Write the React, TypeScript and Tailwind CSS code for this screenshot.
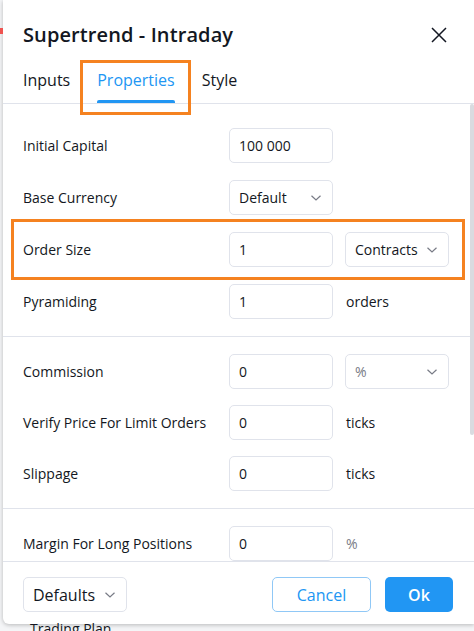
import React from "react";

const font = { fontFamily: '"Open Sans", "Noto Sans", sans-serif' };

function Chevron({ className = "" }: { className?: string }) {
  return (
    <svg width="12" height="8" viewBox="0 0 12 8" className={className}>
      <path d="M1.5 1.8 L6 6 L10.5 1.8" fill="none" stroke="#787b86" strokeWidth="1.2" />
    </svg>
  );
}

function Field({ value }: { value: string }) {
  return (
    <div className="w-[104px] h-[35px] border border-[#e0e3eb] rounded-[5px] flex items-center px-[9px] text-[14px] text-[#131722]">
      {value}
    </div>
  );
}

function Select({ value, muted }: { value: string; muted?: boolean }) {
  return (
    <div className="w-[104px] h-[35px] border border-[#e0e3eb] rounded-[5px] flex items-center justify-between pl-[9px] pr-[10px] text-[14px]">
      <span className={muted ? "text-[#787b86]" : "text-[#131722]"}>{value}</span>
      <Chevron />
    </div>
  );
}

function Row({ label, children, highlight }: { label: string; children: React.ReactNode; highlight?: boolean }) {
  return (
    <div className="relative flex items-center h-[35px]">
      <div className="w-[206px] text-[14px] text-[#131722] whitespace-nowrap">{label}</div>
      <div className="flex items-center gap-[12px]">{children}</div>
      {highlight && (
        <div className="absolute left-[-12px] right-[9px] top-[-13px] bottom-[-13px] border-[3px] border-[#f58220] pointer-events-none" />
      )}
    </div>
  );
}

function Unit({ text }: { text: string }) {
  return <span className="ml-[1px] text-[14px] text-[#131722]">{text}</span>;
}

export default function App() {
  return (
    <div className="relative w-[474px] h-[631px] overflow-hidden bg-[#f4f5f7]" style={font}>
      <div className="absolute left-0 top-[28px] w-[3px] h-[6px] bg-[#ef5350]" />
      <div className="flex flex-col ml-[3px] w-[471px] h-[624px] bg-white shadow-[0_1px_4px_rgba(0,0,0,0.25)] rounded-bl-[6px]">
        {/* Header */}
        <div className="flex items-center justify-between h-[60px] pl-[20px] pr-[26px] pt-[10px]">
          <div className="text-[20px] font-semibold text-[#131722] tracking-[0.1px]">Supertrend - Intraday</div>
          <svg width="18" height="18" viewBox="0 0 18 18">
            <path d="M2 2 L16 16 M16 2 L2 16" stroke="#131722" strokeWidth="1.5" fill="none" />
          </svg>
        </div>
        {/* Tabs */}
        <div className="flex items-end h-[44px] pl-[20px] gap-[27px] border-b border-[#e0e3eb]">
          <div className="h-full flex flex-col justify-center text-[16px] text-[#131722] pb-[3px]">Inputs</div>
          <div className="relative h-full flex flex-col justify-center text-[16px] text-[#2196f3] pb-[3px]">
            Properties
            <div className="absolute left-0 right-0 bottom-0 h-[3px] bg-[#2196f3] rounded-t-[2px]" />
            <div className="absolute left-[-17px] right-[-16px] top-0 bottom-[-12px] border-[3px] border-[#f58220] pointer-events-none" />
          </div>
          <div className="h-full flex flex-col justify-center text-[16px] text-[#131722] pb-[3px]">Style</div>
        </div>
        {/* Content */}
        <div className="relative flex-1 overflow-hidden">
          <div className="flex flex-col">
            <div className="flex flex-col gap-[17px] pl-[20px] pt-[24px] pb-[17px] border-b border-[#e0e3eb]">
              <Row label="Initial Capital"><Field value="100 000" /></Row>
              <Row label="Base Currency"><Select value="Default" /></Row>
              <Row label="Order Size" highlight>
                <Field value="1" />
                <Select value="Contracts" />
              </Row>
              <Row label="Pyramiding"><Field value="1" /><Unit text="orders" /></Row>
            </div>
            <div className="flex flex-col gap-[16px] pl-[20px] pt-[17px] pb-[17px] border-b border-[#e0e3eb]">
              <Row label="Commission"><Field value="0" /><Select value="%" muted /></Row>
              <Row label="Verify Price For Limit Orders"><Field value="0" /><Unit text="ticks" /></Row>
              <Row label="Slippage"><Field value="0" /><Unit text="ticks" /></Row>
            </div>
            <div className="flex flex-col gap-[17px] pl-[20px] pt-[17px] pb-[17px]">
              <Row label="Margin For Long Positions"><Field value="0" /><span className="ml-[1px] text-[14px] text-[#787b86]">%</span></Row>
            </div>
          </div>
          <div className="absolute right-0 top-0 w-[4px] h-[331px] bg-[#d9dbe0] rounded-[2px]" />
        </div>
        {/* Footer */}
        <div className="flex items-start justify-between h-[63px] pl-[20px] pr-[21px] border-t border-[#e0e3eb] pt-[15px]">
          <div className="w-[104px] h-[35px] border border-[#e0e3eb] rounded-[5px] flex items-center justify-between pl-[9px] pr-[10px] text-[16px] text-[#131722]">
            <span>Defaults</span>
            <Chevron />
          </div>
          <div className="flex items-center gap-[14px]">
            <div className="w-[99px] h-[35px] border border-[#90c8f6] rounded-[5px] flex items-center justify-center text-[16px] text-[#2196f3]">Cancel</div>
            <div className="w-[68px] h-[35px] rounded-[5px] bg-[#2196f3] flex items-center justify-center text-[16px] font-semibold text-white">Ok</div>
          </div>
        </div>
      </div>
      <div className="pl-[30px] text-[14px] leading-[14px] text-[#131722] -mt-[2px]">Trading Plan</div>
    </div>
  );
}
